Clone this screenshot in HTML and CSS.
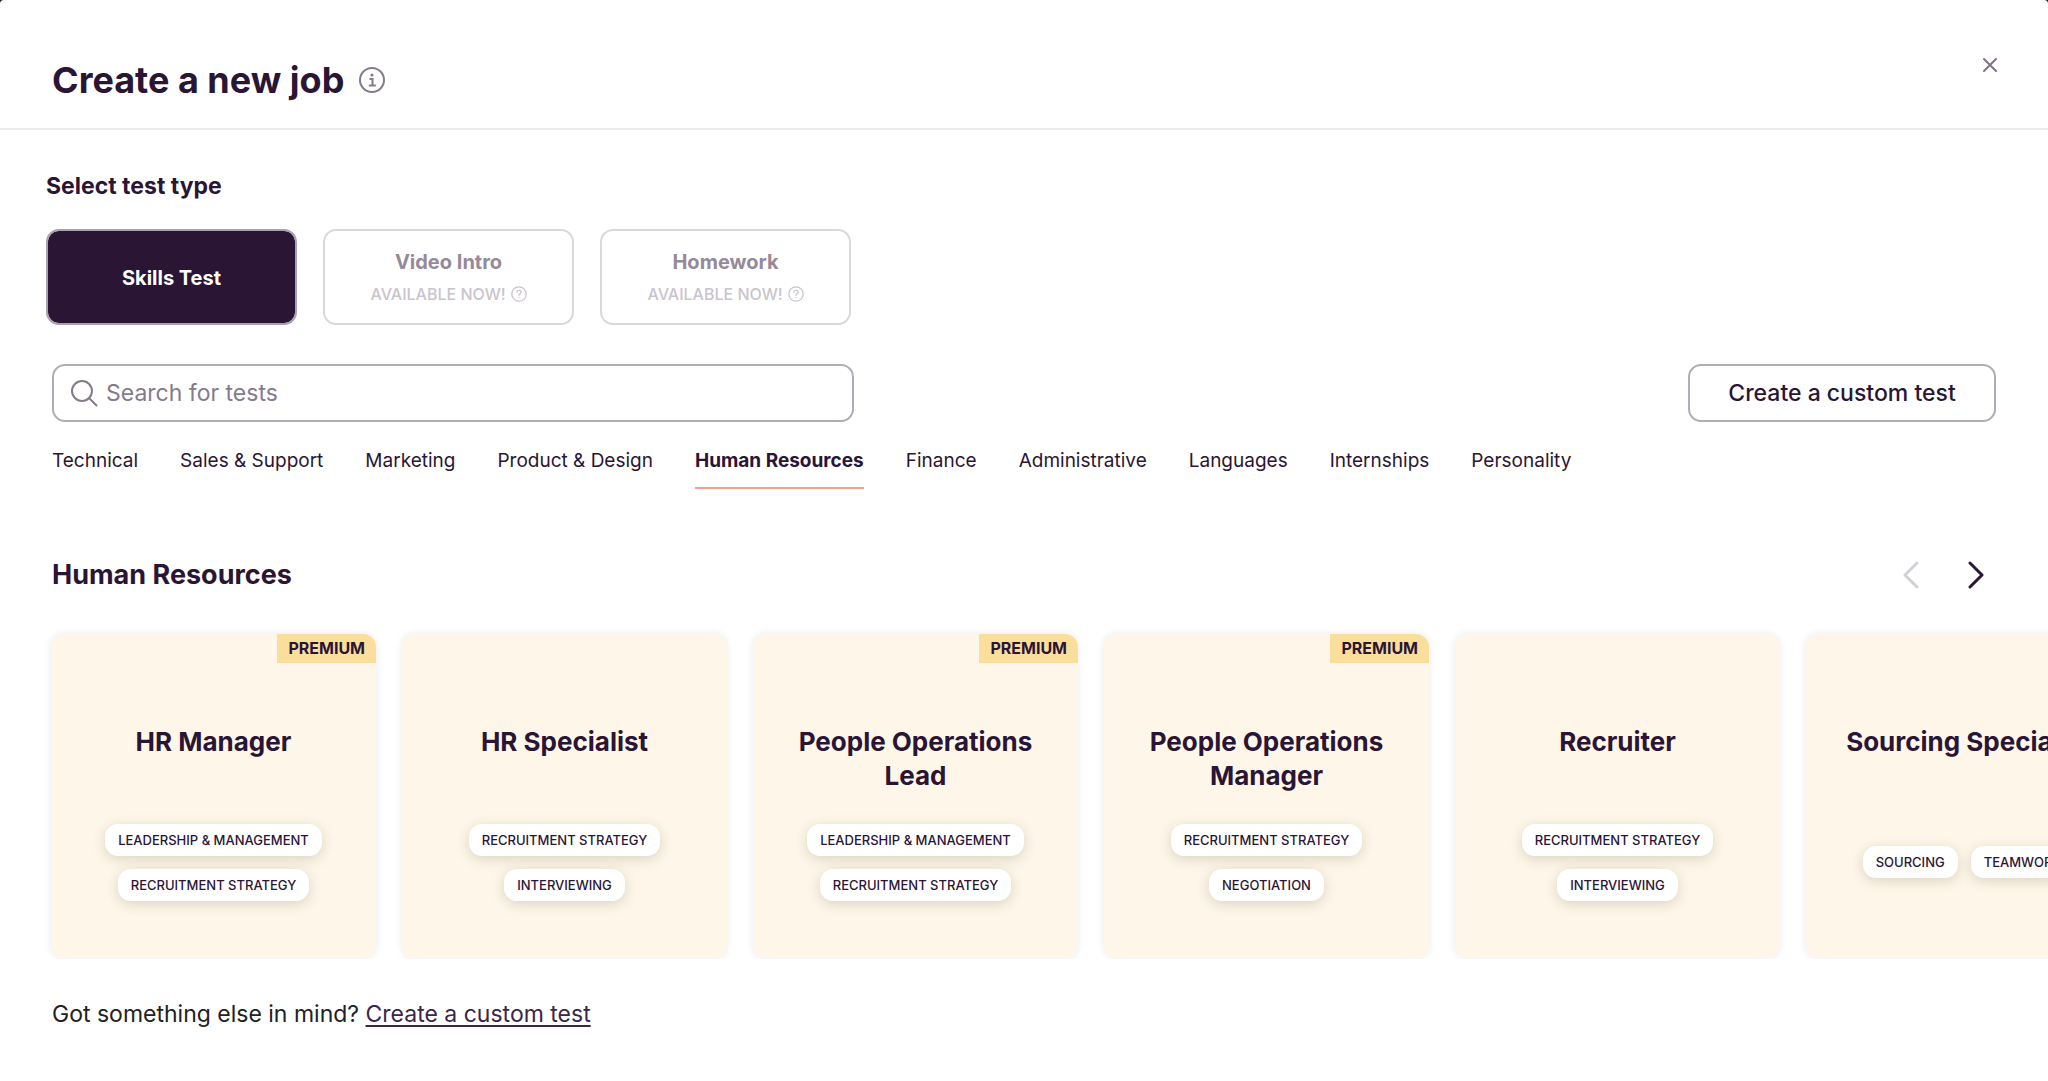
FILE: index.html
```html
<!DOCTYPE html>
<html lang="en">
<head>
<meta charset="utf-8">
<meta name="viewport" content="width=device-width, initial-scale=1">
<title>Create a new job</title>
<link rel="stylesheet" href="styles.css">
</head>
<body>
<main class="modal">
  <header class="modal-header">
    <h1 class="modal-title">Create a new job</h1>
    <button class="icon-button info-button" type="button" aria-label="More information">
      <svg width="28" height="28" viewBox="0 0 28 28" fill="none" stroke="currentColor" stroke-width="2">
        <circle cx="14" cy="14" r="12"/>
        <circle cx="14" cy="9" r="1.6" fill="currentColor" stroke="none"/>
        <path d="M11.5 13h3v6.500M10.800 19.500h7"/>
      </svg>
    </button>
    <button class="icon-button close-button" type="button" aria-label="Close">
      <svg width="14" height="14" viewBox="0 0 14 14" fill="none" stroke="currentColor" stroke-width="2" stroke-linecap="round">
        <path d="M1 1l12 12M13 1L1 13"/>
      </svg>
    </button>
  </header>

  <section class="test-types">
    <h2 class="section-label">Select test type</h2>
    <div class="type-list">
      <button class="type-card type-card-active" type="button"><span class="type-name">Skills Test</span></button>
      <button class="type-card" type="button">
        <span class="type-name">Video Intro</span>
        <span class="type-note">AVAILABLE NOW!
          <svg width="16" height="16" viewBox="0 0 16 16" fill="none" stroke="currentColor" stroke-width="1.300" stroke-linecap="round"><circle cx="8" cy="8" r="7.200"/><path d="M5.900 6.300C6 4.900 7 4.400 8 4.400s2.100.6 2.100 1.900c0 1.400-2.100 1.500-2.100 3M8 11.500v.1"/></svg>
        </span>
      </button>
      <button class="type-card" type="button">
        <span class="type-name">Homework</span>
        <span class="type-note">AVAILABLE NOW!
          <svg width="16" height="16" viewBox="0 0 16 16" fill="none" stroke="currentColor" stroke-width="1.300" stroke-linecap="round"><circle cx="8" cy="8" r="7.200"/><path d="M5.900 6.300C6 4.900 7 4.400 8 4.400s2.100.6 2.100 1.900c0 1.400-2.100 1.500-2.100 3M8 11.500v.1"/></svg>
        </span>
      </button>
    </div>
  </section>

  <div class="toolbar">
    <label class="search">
      <svg width="28" height="28" viewBox="0 0 28 28" fill="none" stroke="currentColor" stroke-width="2" stroke-linecap="round"><circle cx="12" cy="12" r="10"/><path d="M19 19l7.500 7.500"/></svg>
      <input class="search-input" type="text" placeholder="Search for tests" aria-label="Search for tests">
    </label>
    <button class="custom-button" type="button">Create a custom test</button>
  </div>

  <nav class="tabs">
    <a class="tab" href="#technical">Technical</a>
    <a class="tab" href="#sales">Sales &amp; Support</a>
    <a class="tab" href="#marketing">Marketing</a>
    <a class="tab" href="#product">Product &amp; Design</a>
    <a class="tab tab-active" href="#hr">Human Resources</a>
    <a class="tab" href="#finance">Finance</a>
    <a class="tab" href="#administrative">Administrative</a>
    <a class="tab" href="#languages">Languages</a>
    <a class="tab" href="#internships">Internships</a>
    <a class="tab" href="#personality">Personality</a>
  </nav>

  <section class="category" id="hr">
    <div class="category-header">
      <h2 class="category-title">Human Resources</h2>
      <div class="pager">
        <button class="icon-button pager-button" type="button" aria-label="Previous" disabled>
          <svg width="16" height="28" viewBox="0 0 16 28" fill="none" stroke="currentColor" stroke-width="3" stroke-linecap="round" stroke-linejoin="round"><path d="M14 2L2 14l12 12"/></svg>
        </button>
        <button class="icon-button pager-button" type="button" aria-label="Next">
          <svg width="16" height="28" viewBox="0 0 16 28" fill="none" stroke="currentColor" stroke-width="3" stroke-linecap="round" stroke-linejoin="round"><path d="M2 2l12 12L2 26"/></svg>
        </button>
      </div>
    </div>
    <div class="carousel">
      <article class="card">
        <span class="badge">PREMIUM</span>
        <h3 class="card-title">HR Manager</h3>
        <div class="tags"><span class="tag">LEADERSHIP &amp; MANAGEMENT</span><span class="tag">RECRUITMENT STRATEGY</span></div>
      </article>
      <article class="card">
        <h3 class="card-title">HR Specialist</h3>
        <div class="tags"><span class="tag">RECRUITMENT STRATEGY</span><span class="tag">INTERVIEWING</span></div>
      </article>
      <article class="card">
        <span class="badge">PREMIUM</span>
        <h3 class="card-title">People Operations Lead</h3>
        <div class="tags"><span class="tag">LEADERSHIP &amp; MANAGEMENT</span><span class="tag">RECRUITMENT STRATEGY</span></div>
      </article>
      <article class="card">
        <span class="badge">PREMIUM</span>
        <h3 class="card-title">People Operations Manager</h3>
        <div class="tags"><span class="tag">RECRUITMENT STRATEGY</span><span class="tag">NEGOTIATION</span></div>
      </article>
      <article class="card">
        <h3 class="card-title">Recruiter</h3>
        <div class="tags"><span class="tag">RECRUITMENT STRATEGY</span><span class="tag">INTERVIEWING</span></div>
      </article>
      <article class="card">
        <h3 class="card-title">Sourcing Specialist</h3>
        <div class="tags"><span class="tag">SOURCING</span><span class="tag">TEAMWORK</span></div>
      </article>
    </div>
  </section>

  <p class="footer-note">Got something else in mind? <a class="footer-link" href="#custom">Create a custom test</a></p>
</main>
</body>
</html>
```
FILE: styles.css
```css
* {
  box-sizing: border-box;
}

body {
  margin: 0;
  background: #2a1535;
  color: #2a1535;
  font-family: Inter, "Liberation Sans", sans-serif;
}

h1,
h2,
h3,
p {
  margin: 0;
}

button {
  font: inherit;
  color: inherit;
  cursor: pointer;
}

svg {
  display: block;
  flex: none;
}

.modal {
  min-height: 100vh;
  background: #fff;
  border-radius: 4px 4px 0 0;
}

.modal-header {
  display: flex;
  align-items: center;
  gap: 14px;
  height: 130px;
  padding: 32px 51px 0 52px;
  border-bottom: 2px solid #ebebeb;
}

.modal-title {
  font-size: 36px;
  line-height: 44px;
  font-weight: 700;
}

.icon-button {
  display: flex;
  padding: 0;
  border: 0;
  background: none;
  color: #2a1535;
}

.info-button {
  color: #857a8d;
}

.close-button {
  align-self: flex-start;
  margin-left: auto;
  margin-top: 26px;
  color: #7f7387;
}

.test-types {
  padding: 42px 46px 0;
}

.section-label {
  font-size: 23px;
  line-height: 28px;
  font-weight: 700;
}

.type-list {
  display: flex;
  gap: 26px;
  margin-top: 29px;
}

.type-card {
  display: flex;
  flex-direction: column;
  align-items: center;
  justify-content: center;
  gap: 8px;
  width: 251px;
  height: 96px;
  padding: 2px 0 0;
  border: 2px solid #dad7dd;
  border-radius: 13px;
  background: #fff;
  color: #95899a;
}

.type-card-active {
  border-color: #aaa1ae;
  background: #2a1535;
  background-clip: padding-box;
  color: #fff;
}

.type-name {
  font-size: 20px;
  line-height: 24px;
  font-weight: 700;
}

.type-note {
  display: flex;
  align-items: center;
  gap: 5px;
  font-size: 16px;
  line-height: 24px;
  font-weight: 500;
  color: #c9c4cd;
}

.toolbar {
  display: flex;
  justify-content: space-between;
  padding: 39px 52px 0;
}

.search {
  display: flex;
  align-items: center;
  gap: 8px;
  width: 802px;
  height: 58px;
  padding: 0 16px;
  border: 2px solid #b3abb8;
  border-radius: 13px;
  color: #857a8d;
}

.search-input {
  flex: 1;
  padding: 0;
  border: 0;
  outline: 0;
  background: none;
  font: inherit;
  font-size: 23px;
  color: #2a1535;
}

.search-input::placeholder {
  color: #857a8d;
}

.custom-button {
  width: 308px;
  height: 58px;
  padding: 0;
  border: 2px solid #b3abb8;
  border-radius: 13px;
  background: #fff;
  font-size: 23px;
  font-weight: 500;
}

.tabs {
  display: flex;
  gap: 42px;
  padding: 27px 52px 0;
}

.tab {
  padding-bottom: 14px;
  border-bottom: 2px solid transparent;
  font-size: 19px;
  line-height: 24px;
  color: inherit;
  text-decoration: none;
}

.tab-active {
  border-color: #f3a093;
  font-weight: 700;
}

.category-header {
  display: flex;
  align-items: center;
  justify-content: space-between;
  padding: 69px 64px 0 52px;
}

.category-title {
  font-size: 27px;
  line-height: 34px;
  font-weight: 700;
}

.pager {
  display: flex;
  gap: 49px;
}

.pager-button:disabled {
  color: #d4d0d7;
}

.carousel {
  display: flex;
  gap: 26px;
  overflow: hidden;
  padding: 42px 51px 1px;
}

.card {
  position: relative;
  display: flex;
  flex: none;
  flex-direction: column;
  width: 325px;
  height: 324px;
  padding: 91px 36px 0;
  border-radius: 13px;
  background: #fef7e9;
  box-shadow: 0 0 8px rgba(42, 21, 53, 0.09);
  text-align: center;
}

.badge {
  position: absolute;
  top: 0;
  right: 0;
  padding: 2px 11px 3px;
  border-top-right-radius: 13px;
  background: #fadf9c;
  font-size: 16px;
  line-height: 24px;
  font-weight: 700;
}

.card-title {
  font-size: 26px;
  line-height: 34px;
  font-weight: 700;
}

.tags {
  display: flex;
  flex-wrap: wrap;
  align-content: center;
  justify-content: center;
  gap: 13px;
  height: 78px;
  margin-top: auto;
  margin-bottom: 57px;
}

.tag {
  padding: 4px 13px;
  border-radius: 13px;
  background: #fff;
  box-shadow: 0 3px 13px rgba(42, 42, 20, 0.17);
  font-size: 13px;
  line-height: 24px;
  font-weight: 500;
}

.footer-note {
  padding: 41px 52px 32px;
  color: #222;
  font-size: 23px;
  line-height: 28px;
}

.footer-link {
  color: #3d2549;
  text-underline-offset: 3px;
}
```
